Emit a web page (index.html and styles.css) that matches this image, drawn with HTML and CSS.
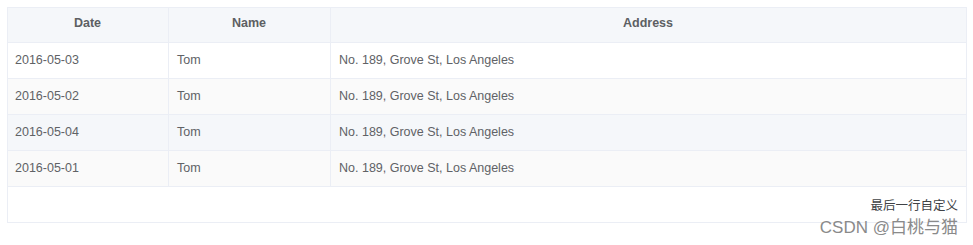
FILE: index.html
```html
<!DOCTYPE html>
<html>
<head>
<meta charset="utf-8">
<link rel="stylesheet" href="styles.css">
</head>
<body>
<div class="page">
  <table class="table">
    <colgroup>
      <col class="c1"><col class="c2"><col class="c3">
    </colgroup>
    <thead>
      <tr><th>Date</th><th>Name</th><th>Address</th></tr>
    </thead>
    <tbody>
      <tr><td>2016-05-03</td><td>Tom</td><td>No. 189, Grove St, Los Angeles</td></tr>
      <tr class="striped"><td>2016-05-02</td><td>Tom</td><td>No. 189, Grove St, Los Angeles</td></tr>
      <tr class="hover"><td>2016-05-04</td><td>Tom</td><td>No. 189, Grove St, Los Angeles</td></tr>
      <tr class="striped"><td>2016-05-01</td><td>Tom</td><td>No. 189, Grove St, Los Angeles</td></tr>
      <tr class="footer"><td colspan="3">最后一行自定义</td></tr>
    </tbody>
  </table>
  <div class="watermark">CSDN @白桃与猫</div>
</div>
</body>
</html>
```

FILE: styles.css
```css
html, body {
  margin: 0;
  padding: 0;
  background: #ffffff;
}
.page {
  position: relative;
  width: 973px;
  height: 245px;
  padding: 7px 0 0 7px;
  box-sizing: border-box;
  font-family: "Liberation Sans", Arial, "Noto Sans CJK SC", sans-serif;
}
.table {
  border-collapse: collapse;
  width: 960px;
  table-layout: fixed;
  font-size: 12.5px;
  color: #606266;
}
.c1 { width: 161px; }
.c2 { width: 162px; }
.c3 { width: auto; }
.table th, .table td {
  border: 1px solid #ebeef5;
  height: 36px;
  padding: 0 8px 2px 7px;
  box-sizing: border-box;
  text-align: left;
  vertical-align: middle;
}
.table td:not(:first-child) { padding-left: 8px; }
.table th {
  height: 35px;
  padding-bottom: 4px;
  background: #f5f7fa;
  font-weight: bold;
  text-align: center;
  color: #5d5f63;
}
.table tr.striped td { background: #fafafa; }
.table tr.hover td { background: #f5f7fa; }
.table tr.footer td {
  text-align: right;
  font-size: 12.5px;
  color: #404246;
  font-family: "Noto Sans CJK SC", sans-serif;
  padding: 0 8px 0 0;
}
.watermark {
  position: absolute;
  right: 15px;
  top: 217px;
  font-size: 17px;
  color: #8a8a8a;
  font-family: "Liberation Sans", "Noto Sans CJK SC", sans-serif;
  line-height: 22px;
}
```
